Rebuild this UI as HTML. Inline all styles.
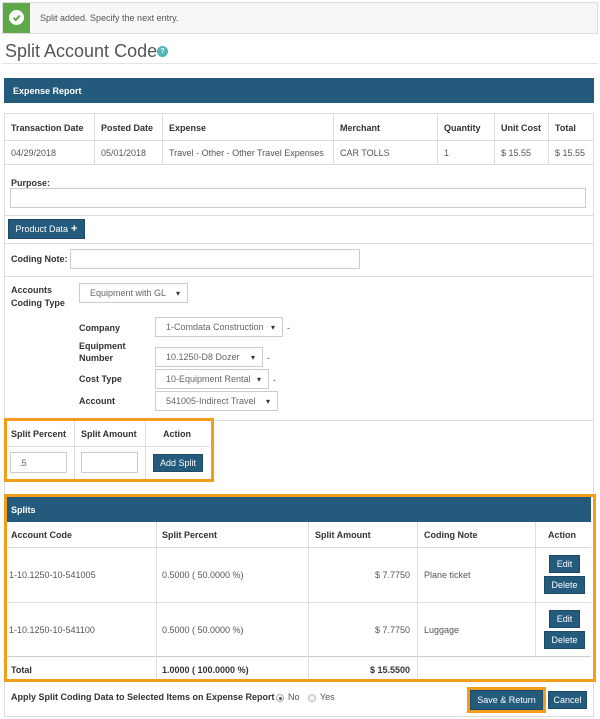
<!DOCTYPE html>
<html><head><meta charset="utf-8"><style>
*{box-sizing:border-box;margin:0;padding:0}
body{width:600px;height:719px;background:#fff;font-family:"Liberation Sans",sans-serif;font-size:9px;color:#555;position:relative;overflow:hidden}
.a{position:absolute;white-space:nowrap}
.b{font-weight:bold;color:#333}
.hl{position:absolute;height:1px;background:#ddd}
.vl{position:absolute;width:1px;background:#ddd}
.inp{position:absolute;border:1px solid #ccc;background:#fff}
.sel{position:absolute;border:1px solid #ccc;background:#fff;color:#666;padding-left:10px;display:flex;align-items:center;white-space:nowrap}
.sel:after{content:"▾";position:absolute;right:7px;font-size:8px;color:#333}
.btn{position:absolute;background:#245a7c;color:#fff;display:flex;align-items:center;justify-content:center;border:1px solid #1d4a66;white-space:nowrap}
.bar{position:absolute;background:#245a7c;color:#fff;font-weight:bold;display:flex;align-items:center}
.or{position:absolute;border:3px solid #f59d1a}
</style></head><body>
<div class="a" style="left:2px;top:2px;width:596px;height:32px;border:1px solid #ddd;background:#f7f7f7"></div>
<div class="a" style="left:3px;top:3px;width:27px;height:30px;background:#5ea84a"></div>
<div class="a" style="left:9px;top:10px;width:15px;height:15px;border-radius:50%;background:#fff"></div>
<svg class="a" style="left:9px;top:10px" width="15" height="15"><path d="M4.5 7.8l2.2 2.2 4-4.4" stroke="#5ea84a" stroke-width="2" fill="none"/></svg>
<div class="a" style="left:40px;top:13px;color:#555">Split added. Specify the next entry.</div>
<div class="a" style="left:5px;top:41px;font-size:18px;color:#555">Split Account Code</div>
<div class="a" style="left:157px;top:46px;width:11px;height:11px;border-radius:50%;background:#4fb6b8;color:#fff;font-size:7px;font-weight:bold;text-align:center;line-height:11px">?</div>
<div class="hl" style="left:2px;top:63px;width:596px;background:#e5e5e5"></div>
<div class="bar" style="left:4px;top:78px;width:590px;height:25px;padding-left:9px">Expense Report</div>
<div class="a" style="left:4px;top:113px;width:590px;height:604px;border:1px solid #ddd"></div>
<div class="hl" style="left:4px;top:140px;width:590px"></div>
<div class="hl" style="left:4px;top:164px;width:590px"></div>
<div class="vl" style="left:94px;top:113px;height:51px"></div>
<div class="vl" style="left:162px;top:113px;height:51px"></div>
<div class="vl" style="left:333px;top:113px;height:51px"></div>
<div class="vl" style="left:437px;top:113px;height:51px"></div>
<div class="vl" style="left:494px;top:113px;height:51px"></div>
<div class="vl" style="left:548px;top:113px;height:51px"></div>
<div class="a b" style="left:11px;top:123px">Transaction Date</div>
<div class="a b" style="left:101px;top:123px">Posted Date</div>
<div class="a b" style="left:169px;top:123px">Expense</div>
<div class="a b" style="left:340px;top:123px">Merchant</div>
<div class="a b" style="left:444px;top:123px">Quantity</div>
<div class="a b" style="left:501px;top:123px">Unit Cost</div>
<div class="a b" style="left:555px;top:123px">Total</div>
<div class="a" style="left:11px;top:148px">04/29/2018</div>
<div class="a" style="left:101px;top:148px">05/01/2018</div>
<div class="a" style="left:169px;top:148px">Travel - Other - Other Travel Expenses</div>
<div class="a" style="left:340px;top:148px">CAR TOLLS</div>
<div class="a" style="left:444px;top:148px">1</div>
<div class="a" style="left:501px;top:148px">$ 15.55</div>
<div class="a" style="left:555px;top:148px">$ 15.55</div>
<div class="a b" style="left:11px;top:178px">Purpose:</div>
<div class="inp" style="left:10px;top:188px;width:576px;height:20px"></div>
<div class="hl" style="left:4px;top:215px;width:590px"></div>
<div class="btn" style="left:8px;top:219px;width:77px;height:20px">Product Data <b style="margin-left:3px;font-size:11px">+</b></div>
<div class="hl" style="left:4px;top:243px;width:590px"></div>
<div class="a b" style="left:11px;top:254px">Coding Note:</div>
<div class="inp" style="left:70px;top:249px;width:290px;height:20px"></div>
<div class="hl" style="left:4px;top:276px;width:590px"></div>
<div class="a b" style="left:11px;top:284px;line-height:13px">Accounts<br>Coding Type</div>
<div class="sel" style="left:79px;top:283px;width:109px;height:20px">Equipment with GL</div>
<div class="a b" style="left:79px;top:323px">Company</div>
<div class="sel" style="left:155px;top:317px;width:128px;height:20px">1-Comdata Construction</div>
<div class="a" style="left:287px;top:323px">-</div>
<div class="a b" style="left:79px;top:340px;line-height:12px">Equipment<br>Number</div>
<div class="sel" style="left:155px;top:347px;width:108px;height:20px">10.1250-D8 Dozer</div>
<div class="a" style="left:267px;top:353px">-</div>
<div class="a b" style="left:79px;top:374px">Cost Type</div>
<div class="sel" style="left:155px;top:369px;width:114px;height:20px">10-Equipment Rental</div>
<div class="a" style="left:273px;top:375px">-</div>
<div class="a b" style="left:79px;top:396px">Account</div>
<div class="sel" style="left:155px;top:391px;width:123px;height:20px">541005-Indirect Travel</div>
<div class="hl" style="left:4px;top:420px;width:590px"></div>
<div class="hl" style="left:4px;top:446px;width:206px"></div>
<div class="vl" style="left:74px;top:420px;height:60px"></div>
<div class="vl" style="left:145px;top:420px;height:60px"></div>
<div class="a b" style="left:11px;top:429px">Split Percent</div>
<div class="a b" style="left:81px;top:429px">Split Amount</div>
<div class="a b" style="left:163px;top:429px">Action</div>
<div class="inp" style="left:10px;top:452px;width:57px;height:21px;color:#666;padding:5px 0 0 8px">.5</div>
<div class="inp" style="left:81px;top:452px;width:57px;height:21px"></div>
<div class="btn" style="left:153px;top:454px;width:50px;height:18px">Add Split</div>
<div class="or" style="left:4px;top:418px;width:210px;height:64px"></div>
<div class="bar" style="left:6px;top:497px;width:585px;height:25px;padding-left:5px">Splits</div>
<div class="hl" style="left:6px;top:547px;width:585px"></div>
<div class="hl" style="left:6px;top:602px;width:585px"></div>
<div class="hl" style="left:6px;top:656px;width:585px;background:#ccc"></div>
<div class="vl" style="left:156px;top:522px;height:156px"></div>
<div class="vl" style="left:308px;top:522px;height:156px"></div>
<div class="vl" style="left:417px;top:522px;height:156px"></div>
<div class="vl" style="left:535px;top:522px;height:134px"></div>
<div class="a b" style="left:11px;top:530px">Account Code</div>
<div class="a b" style="left:162px;top:530px">Split Percent</div>
<div class="a b" style="left:315px;top:530px">Split Amount</div>
<div class="a b" style="left:424px;top:530px">Coding Note</div>
<div class="a b" style="left:548px;top:530px">Action</div>
<div class="a" style="left:9px;top:570px">1-10.1250-10-541005</div>
<div class="a" style="left:162px;top:570px">0.5000 ( 50.0000 %)</div>
<div class="a" style="left:340px;top:570px;width:70px;text-align:right">$ 7.7750</div>
<div class="a" style="left:424px;top:570px">Plane ticket</div>
<div class="btn" style="left:549px;top:555px;width:31px;height:18px">Edit</div>
<div class="btn" style="left:544px;top:576px;width:41px;height:18px">Delete</div>
<div class="a" style="left:9px;top:625px">1-10.1250-10-541100</div>
<div class="a" style="left:162px;top:625px">0.5000 ( 50.0000 %)</div>
<div class="a" style="left:340px;top:625px;width:70px;text-align:right">$ 7.7750</div>
<div class="a" style="left:424px;top:625px">Luggage</div>
<div class="btn" style="left:549px;top:610px;width:31px;height:18px">Edit</div>
<div class="btn" style="left:544px;top:631px;width:41px;height:18px">Delete</div>
<div class="a b" style="left:11px;top:665px">Total</div>
<div class="a b" style="left:162px;top:665px">1.0000 ( 100.0000 %)</div>
<div class="a b" style="left:330px;top:665px;width:80px;text-align:right">$ 15.5500</div>
<div class="or" style="left:4px;top:494px;width:592px;height:188px"></div>
<div class="a b" style="left:11px;top:692px">Apply Split Coding Data to Selected Items on Expense Report</div>
<div class="a" style="left:276px;top:694px;width:8px;height:8px;border-radius:50%;border:1px solid #aaa;background:#fff"><div style="margin:1.5px;width:3px;height:3px;border-radius:50%;background:#555"></div></div>
<div class="a" style="left:288px;top:692px">No</div>
<div class="a" style="left:308px;top:694px;width:8px;height:8px;border-radius:50%;border:1px solid #bbb;background:#f2f2f2"></div>
<div class="a" style="left:320px;top:692px">Yes</div>
<div class="btn" style="left:470px;top:690px;width:73px;height:20px">Save &amp; Return</div>
<div class="or" style="left:467px;top:687px;width:79px;height:26px"></div>
<div class="btn" style="left:548px;top:691px;width:39px;height:18px">Cancel</div>
</body></html>
